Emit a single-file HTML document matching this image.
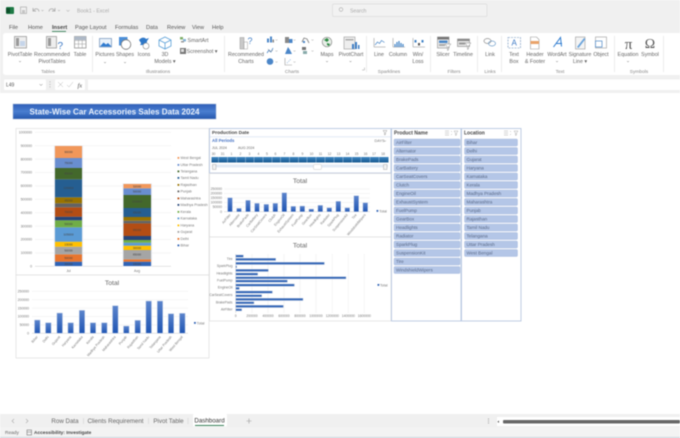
<!DOCTYPE html>
<html lang="en"><head><meta charset="utf-8"><title>Book1 - Excel</title>
<style>
html,body{margin:0;padding:0;width:680px;height:438px;overflow:hidden;background:#fff}
svg{display:block;filter:blur(.5px)}
text{font-family:"Liberation Sans",sans-serif}
.r text{font-size:5.300px;fill:#666;text-anchor:middle}
.g text{font-size:4.800px;fill:#888;text-anchor:middle}
.m text{font-size:5.600px;fill:#555}
.t{font-size:6.800px;fill:#666;text-anchor:middle}
.ax{font-size:3.400px;fill:#777}
.ae{font-size:3.400px;fill:#777;text-anchor:end}
.am{font-size:3.400px;fill:#777;text-anchor:middle}
.d{font-size:3px;fill:#444;text-anchor:middle}
.lg{font-size:3.600px;fill:#777}
.s{font-size:4.600px;fill:#5a6a88}
.h{font-size:5px;fill:#444;font-weight:bold}
.tab{font-size:6.200px;fill:#666;text-anchor:middle}
</style></head><body>
<svg width="680" height="438" viewBox="0 0 680 438" xmlns="http://www.w3.org/2000/svg">
<defs>
<linearGradient id="ban" x1="0" y1="0" x2="0" y2="1"><stop offset="0" stop-color="#2f5fb8"/><stop offset=".5" stop-color="#4a7ed0"/><stop offset="1" stop-color="#2456ad"/></linearGradient>
<linearGradient id="bar" x1="0" y1="0" x2="0" y2="1"><stop offset="0" stop-color="#5b84cc"/><stop offset="1" stop-color="#1f55b3"/></linearGradient>
<linearGradient id="tl" x1="0" y1="0" x2="0" y2="1"><stop offset="0" stop-color="#3f87c2"/><stop offset="1" stop-color="#14578f"/></linearGradient>
</defs>

<!-- app chrome -->
<rect width="680" height="93" fill="#f0f0f0"/>
<rect x="6" y="7" width="8" height="7" rx="1" fill="#1d7a45"/><rect x="6" y="8" width="4" height="5" fill="#0c4f2a"/>
<rect x="20.500" y="7" width="6" height="6.500" fill="none" stroke="#b5b5b5" stroke-width=".8"/><rect x="22" y="10" width="3" height="3" fill="#c5c5c5"/>
<path d="M33 8v3h3M33.500 11c1-3 5-3 5.500 0.500" fill="none" stroke="#b0b0b0" stroke-width=".9"/>
<path d="M55 8v3h-3M54.500 11c-1-3-5-3-5.500 0.500" fill="none" stroke="#b0b0b0" stroke-width=".9"/>
<path d="M41.500 10l1 1 1-1M58 10l1 1 1-1M66.500 10l1.500 1.500 1.500-1.500" fill="none" stroke="#bbb" stroke-width=".6"/>
<text x="77" y="12.500" font-size="5.200" fill="#aaa">Book1  -  Excel</text>
<rect x="332.500" y="4" width="154.500" height="12.500" rx="1.500" fill="#f2f2f2" stroke="#dcdcdc" stroke-width=".7"/>
<circle cx="341" cy="9.500" r="1.800" fill="none" stroke="#aaa" stroke-width=".6"/>
<text x="350" y="12.500" font-size="5.200" fill="#aaa">Search</text>

<g class="m">
<text x="9" y="29">File</text><text x="28" y="29">Home</text><text x="52" y="29" font-weight="bold" style="fill:#444">Insert</text>
<text x="75" y="29">Page Layout</text><text x="115" y="29">Formulas</text><text x="146" y="29">Data</text>
<text x="167" y="29">Review</text><text x="192" y="29">View</text><text x="212" y="29">Help</text>
</g>
<rect x="52" y="31" width="14" height=".8" fill="#217346"/>

<!-- ribbon -->
<rect x="3" y="33" width="690" height="42" rx="2.500" fill="#fff"/>
<path d="M92.500 36v36M224.500 36v36M366.500 36v36M430.500 36v36M477.500 36v36M501.500 36v36M614.500 36v36M663.500 36v36" stroke="#e2e2e2" stroke-width=".6"/>
<g class="r">
<text x="20" y="56">PivotTable</text>
<text x="52" y="56">Recommended</text><text x="52" y="63">PivotTables</text>
<text x="80" y="56">Table</text>
<text x="105" y="56">Pictures</text><text x="125" y="56">Shapes</text><text x="144" y="56">Icons</text>
<text x="165" y="56">3D</text><text x="165" y="63">Models ▾</text>
<text x="198" y="42">SmartArt</text><text x="202" y="53">Screenshot ▾</text>
<text x="246" y="56">Recommended</text><text x="246" y="63">Charts</text>
<text x="327" y="56">Maps</text><text x="351" y="56">PivotChart</text>
<text x="379" y="56">Line</text><text x="398" y="56">Column</text><text x="418" y="56">Win/</text><text x="418" y="63">Loss</text>
<text x="443" y="56">Slicer</text><text x="463" y="56">Timeline</text><text x="490" y="56">Link</text>
<text x="514" y="56">Text</text><text x="514" y="63">Box</text>
<text x="535" y="56">Header</text><text x="535" y="63">&amp; Footer</text>
<text x="557" y="56">WordArt</text>
<text x="580" y="56">Signature</text><text x="580" y="63">Line ▾</text>
<text x="601" y="56">Object</text>
<text x="628" y="56">Equation</text><text x="650" y="56">Symbol</text>
</g>
<g class="g">
<text x="48" y="73">Tables</text><text x="158" y="73">Illustrations</text><text x="292" y="73">Charts</text>
<text x="389" y="73">Sparklines</text><text x="454" y="73">Filters</text><text x="490" y="73">Links</text>
<text x="560" y="73">Text</text><text x="639" y="73">Symbols</text>
</g>
<path d="M19 61l1 1 1-1M104 62l1 1 1-1M124 62l1 1 1-1M326 61l1 1 1-1M349.500 61l1 1 1-1M556 61l1 1 1-1M627 61l1 1 1-1" fill="none" stroke="#777" stroke-width=".5"/>

<!-- ribbon icons -->
<rect x="14.500" y="36.500" width="12" height="11.500" fill="#eee" stroke="#8f8f8f" stroke-width=".7"/><rect x="16" y="38" width="3" height="8" fill="#999"/><rect x="20" y="41" width="5" height="5" fill="#c6d5ea"/>
<rect x="46.500" y="36.500" width="10" height="11.500" fill="#eee" stroke="#8f8f8f" stroke-width=".7"/><rect x="48" y="38" width="3" height="8" fill="#999"/>
<text x="57.500" y="49" font-size="10" fill="#3b78c4">?</text>
<rect x="74.500" y="36.500" width="11.500" height="11.500" fill="#fff" stroke="#888" stroke-width=".7"/><path d="M74.500 40.500h11.500M74.500 44h11.500M78.500 36.500v11.500M82.200 36.500v11.500" stroke="#999" stroke-width=".5"/><rect x="74.500" y="36.500" width="11.500" height="3.500" fill="#aeb9c7"/>
<rect x="99.500" y="38.500" width="12" height="8.500" fill="#eaf2fb" stroke="#6e8fb8" stroke-width=".7"/><path d="M100 46.500l3.500-4 2.500 2 2-1.500 3.500 3.500z" fill="#2f7bd0"/>
<rect x="119" y="37" width="8.500" height="8.500" fill="#4b8fd9"/><circle cx="126" cy="44.500" r="4.800" fill="#fff" stroke="#777" stroke-width=".8"/>
<path d="M139 40c2-3 6-3 7-1l3-1-2 3c0 3-2 4-4 4h-3c1-1 1-2 1-2z" fill="#2f78c8"/><circle cx="146" cy="46" r="3" fill="#fff" stroke="#888" stroke-width=".6"/>
<path d="M165 37l6 3v6l-6 3-6-3v-6zM159 40l6 3 6-3M165 43v6" fill="none" stroke="#5ba0d8" stroke-width=".8"/>
<rect x="180" y="37" width="3" height="2.500" fill="#7fae6a"/><rect x="183" y="39" width="3" height="2.500" fill="#88b6d8"/><rect x="181" y="41" width="3" height="1.500" fill="#999"/>
<rect x="180" y="48" width="6" height="6" fill="#777"/><rect x="181" y="49" width="3" height="3" fill="#ddd"/>
<rect x="240" y="37.500" width="4" height="11.500" fill="#c9c9c9" stroke="#888" stroke-width=".4"/><rect x="244" y="42" width="3.500" height="7" fill="#fff" stroke="#888" stroke-width=".4"/>
<text x="247.500" y="44" font-size="9" fill="#4a84c8">?</text>
<g fill="#4b86c8">
<rect x="267" y="38.500" width="2" height="4"/><rect x="270" y="36.500" width="2" height="6"/><rect x="272.500" y="39.500" width="1.500" height="3" fill="#888"/>
<rect x="285" y="37" width="4" height="6" fill="#888"/><rect x="289" y="39" width="3.500" height="4"/>
<path d="M302 42l2-4 3 1 2 4" fill="none" stroke="#888" stroke-width=".9"/><rect x="303" y="41" width="2" height="2"/>
<path d="M267 53l2-3 2 2 2-4" fill="none" stroke="#4b86c8" stroke-width=".8"/><path d="M268 49l2 3 3-2" fill="none" stroke="#888" stroke-width=".5"/>
<path d="M285 54l3-7 2 3 2 4z"/>
<rect x="302" y="47" width="4" height="3" fill="#777"/><rect x="303" y="51" width="4" height="3" fill="#8aa"/>
<circle cx="270" cy="61.500" r="3.300"/>
</g>
<path d="M285 58v7h7" fill="none" stroke="#999" stroke-width=".6"/><path d="M287 63l2-2 2-2" stroke="#9bbbdd" stroke-width=".9" stroke-dasharray="1 1"/>
<path d="M275.500 39.500l1 1 1-1M293.500 39.500l1 1 1-1M311.500 39.500l1 1 1-1M275.500 50.500l1 1 1-1M293.500 50.500l1 1 1-1M311.500 50.500l1 1 1-1M275.500 61.500l1 1 1-1M293.500 61.500l1 1 1-1" fill="none" stroke="#888" stroke-width=".4"/>
<circle cx="327" cy="42" r="4.800" fill="#e8efe8" stroke="#888" stroke-width=".7"/><path d="M324 40l3-2 2 2-2 2zM327 43l3 1-1 2-2-1z" fill="#2d8a43"/>
<rect x="344" y="37" width="11" height="12" fill="#eee" stroke="#999" stroke-width=".6"/><rect x="345.500" y="39" width="8" height="1.500" fill="#aaa"/><rect x="352" y="44" width="2" height="5" fill="#3f7fc6"/><rect x="355" y="42" width="2" height="7" fill="#3f7fc6"/><rect x="358" y="45" width="1.500" height="4" fill="#3f7fc6"/>
<path d="M374 38v9h11.500" fill="none" stroke="#888" stroke-width=".5"/><path d="M375 45l2.500-3 2 1.500 2-3 3 2" fill="none" stroke="#4a88c8" stroke-width=".7"/>
<path d="M393 38v9h12" fill="none" stroke="#888" stroke-width=".5"/><path d="M395 47v-3M397 47v-5M399 47v-6M401 47v-4M403 47v-3" stroke="#3f82c6" stroke-width="1.200"/>
<path d="M413 38v9h12" fill="none" stroke="#888" stroke-width=".5"/><rect x="414.500" y="40" width="2" height="2.500" fill="#3f82c6"/><rect x="418" y="43" width="2" height="2.500" fill="#555"/><rect x="421.500" y="40" width="2" height="2.500" fill="#3f82c6"/>
<rect x="437.500" y="37" width="11.500" height="11" fill="#eee" stroke="#888" stroke-width=".6"/><rect x="437.500" y="37" width="11.500" height="2.500" fill="#777"/><rect x="439" y="40.500" width="8.500" height="2.500" fill="#4a88c8"/><rect x="439" y="44" width="6" height="2" fill="#aaa"/><path d="M445 44h6l-2.500 3v3l-1 .500v-3.500z" fill="#fff" stroke="#777" stroke-width=".4"/>
<rect x="457.500" y="39" width="12" height="7.500" fill="#e5e5e5" stroke="#888" stroke-width=".6"/><rect x="457.500" y="39" width="12" height="2" fill="#888"/><rect x="459" y="42.500" width="6" height="2" fill="#999"/><path d="M465 43h6l-2.500 3v3l-1 .500v-3.500z" fill="#fff" stroke="#777" stroke-width=".4"/>
<ellipse cx="487.500" cy="41" rx="3.500" ry="2.500" fill="none" stroke="#8a8a8a" stroke-width=".7"/><ellipse cx="492" cy="43.500" rx="3.500" ry="2.500" fill="none" stroke="#6b9bc8" stroke-width=".7"/>
<rect x="508" y="37.500" width="12.500" height="10.500" fill="#fff" stroke="#6b8db8" stroke-width=".6" stroke-dasharray="2 1"/><text x="514.200" y="45.500" font-size="8" fill="#3b78c4" text-anchor="middle">A</text>
<path d="M530.500 37h6l2.500 2.500v9.500h-8.500z" fill="#fff" stroke="#999" stroke-width=".6"/><rect x="530.500" y="41" width="8.500" height="3" fill="#e9a36a"/>
<path d="M553.500 47l7-9.500 1 9M556 43.500h6" fill="none" stroke="#2f7cd0" stroke-width="1"/>
<rect x="575.500" y="37" width="9.500" height="12" fill="#f4f4f4" stroke="#999" stroke-width=".6"/><path d="M577 47l7-9 1.500 1-7 9z" fill="#6ba4dc"/>
<rect x="595.500" y="37" width="11" height="11" fill="#fff" stroke="#999" stroke-width=".6"/><rect x="595.500" y="41" width="6.500" height="6" fill="#fff" stroke="#4a88c8" stroke-width=".7"/>
<text x="628.500" y="49" font-size="15" fill="#555" text-anchor="middle" style="font-family:'Liberation Serif',serif">π</text>
<text x="650" y="48" font-size="14" fill="#555" text-anchor="middle" style="font-family:'Liberation Serif',serif">Ω</text>
<path d="M362 70h2.500v-2.500" fill="none" stroke="#888" stroke-width=".4"/>

<!-- formula bar -->
<rect x="4" y="79.500" width="42" height="10.500" rx="1" fill="#fff"/>
<text x="6" y="86.500" font-size="5" fill="#555">L49</text>
<path d="M39.500 84l1.500 1.500 1.500-1.500" fill="none" stroke="#777" stroke-width=".5"/>
<path d="M50 81.500v.8M50 84v.8M50 86.500v.8" stroke="#888" stroke-width=".7"/>
<rect x="55" y="79.500" width="30" height="10.500" rx="1" fill="#fff"/>
<path d="M58 82l5 5M63 82l-5 5" stroke="#bbb" stroke-width=".5"/><path d="M67 85l2 2 4-5" fill="none" stroke="#bbb" stroke-width=".5"/>
<text x="77.500" y="87.500" font-size="6.500" fill="#555" font-style="italic" style="font-family:'Liberation Serif',serif">fx</text>
<rect x="88" y="79.500" width="592" height="10.500" fill="#fff"/>

<!-- sheet -->
<rect x="0" y="93" width="680" height="321" fill="#fff"/>

<!-- banner -->
<rect x="13" y="104" width="203" height="15" fill="url(#ban)" stroke="#9fb3d4" stroke-width=".5"/>
<text x="114.500" y="114.700" font-size="8.500" font-weight="bold" fill="#e8effa" text-anchor="middle" textLength="170" lengthAdjust="spacingAndGlyphs">State-Wise Car Accessories Sales Data 2024</text>

<!-- stacked chart -->
<rect x="16" y="128.500" width="193" height="146.500" fill="#fff" stroke="#d9d9d9" stroke-width=".6"/>
<path d="M35 132.300h136M35 145.700h136M35 159.100h136M35 172.500h136M35 185.900h136M35 199.300h136M35 212.700h136M35 226.100h136M35 239.500h136M35 252.900h136" stroke="#ececec" stroke-width=".5"/>
<path d="M35 266.300h136" stroke="#ccc" stroke-width=".5"/>
<g class="ae">
<text x="32" y="133.500">1000000</text><text x="32" y="147">900000</text><text x="32" y="160.300">800000</text><text x="32" y="173.700">700000</text><text x="32" y="187">600000</text><text x="32" y="200.500">500000</text><text x="32" y="214">400000</text><text x="32" y="227.300">300000</text><text x="32" y="240.700">200000</text><text x="32" y="254">100000</text><text x="32" y="267.500">0</text>
</g>
<rect x="54" y="145.500" width="29" height="121" fill="#e6e9f0"/>
<rect x="122.500" y="183.500" width="29.500" height="83" fill="#e6e9f0"/>
<g>
<rect x="55" y="261.700" width="27" height="4.300" fill="#2f63b5"/>
<rect x="55" y="254.300" width="27" height="7.400" fill="#e8752e"/>
<rect x="55" y="246.700" width="27" height="7.600" fill="#a5a5a5"/>
<rect x="55" y="241.700" width="27" height="5" fill="#ffc000"/>
<rect x="55" y="227.300" width="27" height="14.400" fill="#5b9bd5"/>
<rect x="55" y="220.300" width="27" height="7" fill="#70ad47"/>
<rect x="55" y="216.700" width="27" height="3.600" fill="#264478"/>
<rect x="55" y="207.300" width="27" height="9.400" fill="#b34d14"/>
<rect x="55" y="203.300" width="27" height="4" fill="#636363"/>
<rect x="55" y="197.300" width="27" height="6" fill="#997300"/>
<rect x="55" y="179.300" width="27" height="18" fill="#255e91"/>
<rect x="55" y="168" width="27" height="11.300" fill="#43682b"/>
<rect x="55" y="158" width="27" height="10" fill="#698ed0"/>
<rect x="55" y="146" width="27" height="12" fill="#f1975a"/>
</g>
<g>
<rect x="123.500" y="261.700" width="27.500" height="4.300" fill="#2f63b5"/>
<rect x="123.500" y="259.300" width="27.500" height="2.400" fill="#e8752e"/>
<rect x="123.500" y="250" width="27.500" height="9.300" fill="#a5a5a5"/>
<rect x="123.500" y="245.700" width="27.500" height="4.300" fill="#ffc000"/>
<rect x="123.500" y="242.700" width="27.500" height="3" fill="#5b9bd5"/>
<rect x="123.500" y="240" width="27.500" height="2.700" fill="#70ad47"/>
<rect x="123.500" y="236" width="27.500" height="4" fill="#264478"/>
<rect x="123.500" y="223.300" width="27.500" height="12.700" fill="#b34d14"/>
<rect x="123.500" y="220.700" width="27.500" height="2.700" fill="#636363"/>
<rect x="123.500" y="217" width="27.500" height="3.700" fill="#997300"/>
<rect x="123.500" y="208" width="27.500" height="9" fill="#255e91"/>
<rect x="123.500" y="195" width="27.500" height="13" fill="#43682b"/>
<rect x="123.500" y="188.300" width="27.500" height="6.700" fill="#698ed0"/>
<rect x="123.500" y="184" width="27.500" height="4.300" fill="#f1975a"/>
</g>
<g class="d">
<text x="68.500" y="265">30000</text><text x="68.500" y="259">50000</text><text x="68.500" y="251.500">50000</text><text x="68.500" y="245.500">13000</text><text x="68.500" y="235.500">105000</text><text x="68.500" y="225">50000</text><text x="68.500" y="213">70000</text><text x="68.500" y="201.500">45000</text><text x="68.500" y="189">135000</text><text x="68.500" y="174.500">85000</text><text x="68.500" y="164">75000</text><text x="68.500" y="153">90000</text>
<text x="137" y="265">15000</text><text x="137" y="255.500">65000</text><text x="137" y="249">30000</text><text x="137" y="231">95000</text><text x="137" y="213.500">65000</text><text x="137" y="202.500">100000</text><text x="137" y="192.500">50000</text><text x="137" y="187.500">32000</text>
</g>
<text x="68.500" y="272" class="am">Jul</text><text x="137" y="272" class="am">Aug</text>
<g>
<rect x="177.500" y="157" width="1.800" height="1.800" fill="#f1975a"/><rect x="177.500" y="164" width="1.800" height="1.800" fill="#698ed0"/><rect x="177.500" y="170.500" width="1.800" height="1.800" fill="#43682b"/><rect x="177.500" y="177" width="1.800" height="1.800" fill="#255e91"/><rect x="177.500" y="184" width="1.800" height="1.800" fill="#997300"/><rect x="177.500" y="190.500" width="1.800" height="1.800" fill="#636363"/><rect x="177.500" y="197.500" width="1.800" height="1.800" fill="#b34d14"/><rect x="177.500" y="204" width="1.800" height="1.800" fill="#264478"/><rect x="177.500" y="211" width="1.800" height="1.800" fill="#70ad47"/><rect x="177.500" y="217.500" width="1.800" height="1.800" fill="#5b9bd5"/><rect x="177.500" y="224.500" width="1.800" height="1.800" fill="#ffc000"/><rect x="177.500" y="231" width="1.800" height="1.800" fill="#a5a5a5"/><rect x="177.500" y="238" width="1.800" height="1.800" fill="#e8752e"/><rect x="177.500" y="244.500" width="1.800" height="1.800" fill="#2f63b5"/>
</g>
<g class="lg">
<text x="180.500" y="159.200">West Bengal</text><text x="180.500" y="166">Uttar Pradesh</text><text x="180.500" y="172.500">Telangana</text><text x="180.500" y="179.200">Tamil Nadu</text><text x="180.500" y="186">Rajasthan</text><text x="180.500" y="192.700">Punjab</text><text x="180.500" y="199.500">Maharashtra</text><text x="180.500" y="206.200">Madhya Pradesh</text><text x="180.500" y="213">Kerala</text><text x="180.500" y="219.700">Karnataka</text><text x="180.500" y="226.500">Haryana</text><text x="180.500" y="233.200">Gujarat</text><text x="180.500" y="240">Delhi</text><text x="180.500" y="246.700">Bihar</text>
</g>

<!-- total chart 1 -->
<rect x="16" y="275" width="193" height="83" fill="#fff" stroke="#d9d9d9" stroke-width=".6"/>
<text x="112" y="285" class="t">Total</text>
<path d="M32 291.300h156M32 299.700h156M32 308.100h156M32 316.500h156M32 324.900h156" stroke="#ececec" stroke-width=".5"/><path d="M32 333.300h156" stroke="#ccc" stroke-width=".5"/>
<g class="ae"><text x="29" y="292.500">250000</text><text x="29" y="301">200000</text><text x="29" y="309.300">150000</text><text x="29" y="317.700">100000</text><text x="29" y="326">50000</text><text x="29" y="334.500">0</text></g>
<g fill="url(#bar)" stroke="#c7d3e8" stroke-width=".5">
<rect x="34.500" y="320" width="5.600" height="13.300"/><rect x="45.500" y="322.700" width="5.600" height="10.600"/><rect x="56.900" y="313" width="5.600" height="20.300"/><rect x="67.900" y="322.700" width="5.600" height="10.600"/><rect x="79.200" y="310.300" width="5.600" height="23"/><rect x="90.200" y="322.700" width="5.600" height="10.600"/><rect x="101.500" y="322.700" width="5.600" height="10.600"/><rect x="112.500" y="305.700" width="5.600" height="27.600"/><rect x="123.500" y="326" width="5.600" height="7.300"/><rect x="134.900" y="320.300" width="5.600" height="13"/><rect x="145.900" y="301" width="5.600" height="32.300"/><rect x="157.200" y="301" width="5.600" height="32.300"/><rect x="168.200" y="313.700" width="5.600" height="19.600"/><rect x="179.500" y="313.300" width="5.600" height="20"/>
</g>
<g class="ae">
<text transform="translate(38,337) rotate(-50)">Bihar</text><text transform="translate(49,337) rotate(-50)">Delhi</text><text transform="translate(60.500,337) rotate(-50)">Gujarat</text><text transform="translate(71.500,337) rotate(-50)">Haryana</text><text transform="translate(83,337) rotate(-50)">Karnataka</text><text transform="translate(94,337) rotate(-50)">Kerala</text><text transform="translate(105,337) rotate(-50)">Madhya Pradesh</text><text transform="translate(116,337) rotate(-50)">Maharashtra</text><text transform="translate(127,337) rotate(-50)">Punjab</text><text transform="translate(138.500,337) rotate(-50)">Rajasthan</text><text transform="translate(149.500,337) rotate(-50)">Tamil Nadu</text><text transform="translate(161,337) rotate(-50)">Telangana</text><text transform="translate(172,337) rotate(-50)">Uttar Pradesh</text><text transform="translate(183,337) rotate(-50)">West Bengal</text>
</g>
<rect x="194" y="322" width="1.800" height="1.800" fill="#2f63b5"/><text x="196.800" y="324.300" class="lg">Total</text>

<!-- timeline -->
<rect x="209.500" y="128.500" width="181.500" height="44.500" fill="#fff" stroke="#b8c8e2" stroke-width=".9"/>
<text x="212" y="134" font-size="4.800" font-weight="bold" fill="#444">Production  Date</text>
<path d="M383 130.500h4l-1.500 2v2l-1 .500v-2.500z" fill="none" stroke="#999" stroke-width=".5"/>
<path d="M210 136.800h180.500" stroke="#dde6f3" stroke-width=".8"/>
<text x="212" y="142" font-size="4.300" fill="#4472c4" font-weight="bold">All Periods</text>
<text x="374.500" y="142" font-size="3.800" fill="#777">DAYS</text><path d="M384 140.500l1 1 1-1" fill="none" stroke="#777" stroke-width=".4"/>
<text x="212" y="149" font-size="3.500" fill="#666">JUL 2024</text><text x="238" y="149" font-size="3.500" fill="#666">AUG 2024</text>
<g class="am">
<text x="213.500" y="155">30</text><text x="222.700" y="155">31</text><text x="231.500" y="155">1</text><text x="240.500" y="155">2</text><text x="249.500" y="155">3</text><text x="258.500" y="155">4</text><text x="267" y="155">5</text><text x="275.500" y="155">6</text><text x="284.500" y="155">7</text><text x="293.500" y="155">8</text><text x="302.500" y="155">9</text><text x="311.500" y="155">10</text><text x="320.500" y="155">11</text><text x="329.500" y="155">12</text><text x="338.500" y="155">13</text><text x="347.500" y="155">14</text><text x="356.500" y="155">15</text><text x="365.500" y="155">16</text><text x="374" y="155">17</text><text x="383" y="155">18</text>
</g>
<rect x="211.500" y="157" width="177" height="5.500" fill="url(#tl)"/>
<path d="M218.500 157v5.500M227.500 157v5.500M236.500 157v5.500M245.500 157v5.500M254 157v5.500M263 157v5.500M272 157v5.500M280.500 157v5.500M289.500 157v5.500M298.500 157v5.500M307 157v5.500M316 157v5.500M325 157v5.500M334 157v5.500M343 157v5.500M352 157v5.500M361 157v5.500M370 157v5.500M379 157v5.500" stroke="#cfe0f0" stroke-width=".4"/>
<rect x="212" y="164.500" width="176" height="3" fill="#e3ebf6"/>
<rect x="212.500" y="164.500" width="3.500" height="5" fill="#f2f2f2" stroke="#999" stroke-width=".4"/><rect x="383.500" y="164.500" width="3.500" height="5" fill="#f2f2f2" stroke="#999" stroke-width=".4"/>
<rect x="313.500" y="164.500" width="8" height="5" rx="1" fill="#fff" stroke="#bbb" stroke-width=".4"/>

<!-- total chart 2 -->
<rect x="209.500" y="173.500" width="181.500" height="63.500" fill="#fff" stroke="#d9d9d9" stroke-width=".6"/>
<text x="300" y="183" class="t">Total</text>
<path d="M224 189h146M224 193.500h146M224 198h146M224 202.500h146M224 207h146" stroke="#ececec" stroke-width=".5"/><path d="M224 211.700h146" stroke="#ccc" stroke-width=".5"/>
<g class="ae"><text x="222" y="190">250000</text><text x="222" y="194.500">200000</text><text x="222" y="199">150000</text><text x="222" y="203.500">100000</text><text x="222" y="208">50000</text><text x="222" y="212.800">0</text></g>
<g fill="url(#bar)" stroke="#c7d3e8" stroke-width=".4">
<rect x="227.600" y="197.700" width="4.800" height="14"/><rect x="236.600" y="208.300" width="4.800" height="3.400"/><rect x="245.600" y="200.300" width="4.800" height="11.400"/><rect x="254.600" y="203.300" width="4.800" height="8.400"/><rect x="263.900" y="204.300" width="4.800" height="7.400"/><rect x="272.900" y="203.300" width="4.800" height="8.400"/><rect x="281.900" y="192.700" width="4.800" height="19"/><rect x="290.900" y="206.300" width="4.800" height="5.400"/><rect x="299.900" y="206" width="4.800" height="5.700"/><rect x="308.900" y="209" width="4.800" height="2.700"/><rect x="317.900" y="205.300" width="4.800" height="6.400"/><rect x="326.900" y="207.700" width="4.800" height="4"/><rect x="335.900" y="201.300" width="4.800" height="10.400"/><rect x="344.900" y="207.700" width="4.800" height="4"/><rect x="353.900" y="195.700" width="4.800" height="16"/><rect x="362.900" y="202.700" width="4.800" height="9"/>
</g>
<g class="ae">
<text transform="translate(231,215) rotate(-50)">AirFilter</text><text transform="translate(240,215) rotate(-50)">Alternator</text><text transform="translate(249,215) rotate(-50)">BrakePads</text><text transform="translate(258,215) rotate(-50)">CarBattery</text><text transform="translate(267,215) rotate(-50)">CarSeatCovers</text><text transform="translate(276,215) rotate(-50)">Clutch</text><text transform="translate(285,215) rotate(-50)">EngineOil</text><text transform="translate(294,215) rotate(-50)">ExhaustSystem</text><text transform="translate(303,215) rotate(-50)">FuelPump</text><text transform="translate(312,215) rotate(-50)">GearBox</text><text transform="translate(321,215) rotate(-50)">Headlights</text><text transform="translate(330,215) rotate(-50)">Radiator</text><text transform="translate(339,215) rotate(-50)">SparkPlug</text><text transform="translate(348,215) rotate(-50)">SuspensionKit</text><text transform="translate(357,215) rotate(-50)">Tire</text><text transform="translate(366,215) rotate(-50)">WindshieldWipers</text>
</g>
<rect x="376.500" y="210" width="1.800" height="1.800" fill="#2f63b5"/><text x="379.200" y="212.300" class="lg">Total</text>

<!-- total chart 3 -->
<rect x="209.500" y="237" width="181.500" height="84" fill="#fff" stroke="#d9d9d9" stroke-width=".6"/>
<text x="300" y="247.500" class="t">Total</text>
<path d="M252 254v59M268 254v59M284 254v59M300 254v59M316 254v59M332.300 254v59M348.300 254v59M364.300 254v59" stroke="#ececec" stroke-width=".5"/><path d="M235.700 254v59" stroke="#ccc" stroke-width=".5"/>
<g fill="#2f63b5" stroke="#b9c6dd" stroke-width=".4">
<rect x="235.700" y="255" width="7.700" height="2.200"/><rect x="235.700" y="258.300" width="40" height="2.200"/><rect x="235.700" y="262.300" width="88.700" height="2.200"/><rect x="235.700" y="265.700" width="1" height="2.200"/><rect x="235.700" y="269.300" width="32.700" height="2.200"/><rect x="235.700" y="273" width="22" height="2.200"/><rect x="235.700" y="276.700" width="110.300" height="2.200"/><rect x="235.700" y="280" width="51.700" height="2.200"/><rect x="235.700" y="284" width="58.700" height="2.200"/><rect x="235.700" y="287.300" width="3.700" height="2.200"/><rect x="235.700" y="291" width="36.700" height="2.200"/><rect x="235.700" y="294.700" width="26" height="2.200"/><rect x="235.700" y="298.300" width="67.300" height="2.200"/><rect x="235.700" y="301.700" width="18.300" height="2.200"/><rect x="235.700" y="305.300" width="47.700" height="2.200"/><rect x="235.700" y="308.700" width="6" height="2.200"/>
</g>
<g class="ae">
<text x="232.500" y="260">Tire</text><text x="232.500" y="267">SparkPlug</text><text x="232.500" y="274.300">Headlights</text><text x="232.500" y="281.300">FuelPump</text><text x="232.500" y="288.700">EngineOil</text><text x="232.500" y="296">CarSeatCovers</text><text x="232.500" y="303.300">BrakePads</text><text x="232.500" y="310.700">AirFilter</text>
</g>
<g class="am">
<text x="235.700" y="317">0</text><text x="252" y="317">200000</text><text x="268" y="317">400000</text><text x="284" y="317">600000</text><text x="300" y="317">800000</text><text x="316" y="317">1000000</text><text x="332.300" y="317">1200000</text><text x="348.300" y="317">1400000</text><text x="364.300" y="317">1600000</text>
</g>
<rect x="377.500" y="284" width="1.800" height="1.800" fill="#2f63b5"/><text x="380" y="286.300" class="lg">Total</text>

<!-- product slicer -->
<rect x="391.500" y="128.500" width="69.500" height="192.500" fill="#fff" stroke="#b8c8e2" stroke-width=".9"/>
<text x="394" y="134.500" class="h">Product Name</text>
<path d="M445 131h4M445 133h4M445 135h4M451 131l1 1M451 135l1-1" stroke="#aaa" stroke-width=".5" fill="none"/>
<path d="M454 131h4l-1.500 2v2l-1 .500v-2.500z" fill="none" stroke="#aaa" stroke-width=".5"/>
<g fill="#b4c6e7" stroke="#a3b6da" stroke-width=".4">
<rect x="394" y="139" width="66" height="7" rx="1"/><rect x="394" y="147.500" width="66" height="7" rx="1"/><rect x="394" y="156" width="66" height="7" rx="1"/><rect x="394" y="164.500" width="66" height="7" rx="1"/><rect x="394" y="173" width="66" height="7" rx="1"/><rect x="394" y="181.500" width="66" height="7" rx="1"/><rect x="394" y="190" width="66" height="7" rx="1"/><rect x="394" y="198.500" width="66" height="7" rx="1"/><rect x="394" y="207" width="66" height="7" rx="1"/><rect x="394" y="215.500" width="66" height="7" rx="1"/><rect x="394" y="224" width="66" height="7" rx="1"/><rect x="394" y="232.500" width="66" height="7" rx="1"/><rect x="394" y="241" width="66" height="7" rx="1"/><rect x="394" y="249.500" width="66" height="7" rx="1"/><rect x="394" y="258" width="66" height="7" rx="1"/><rect x="394" y="266.500" width="66" height="7" rx="1"/>
</g>
<g class="s">
<text x="396" y="144.200">AirFilter</text><text x="396" y="152.700">Alternator</text><text x="396" y="161.200">BrakePads</text><text x="396" y="169.700">CarBattery</text><text x="396" y="178.200">CarSeatCovers</text><text x="396" y="186.700">Clutch</text><text x="396" y="195.200">EngineOil</text><text x="396" y="203.700">ExhaustSystem</text><text x="396" y="212.200">FuelPump</text><text x="396" y="220.700">GearBox</text><text x="396" y="229.200">Headlights</text><text x="396" y="237.700">Radiator</text><text x="396" y="246.200">SparkPlug</text><text x="396" y="254.700">SuspensionKit</text><text x="396" y="263.200">Tire</text><text x="396" y="271.700">WindshieldWipers</text>
</g>

<!-- location slicer -->
<rect x="461.500" y="128.500" width="59.500" height="192.500" fill="#fff" stroke="#b8c8e2" stroke-width=".9"/>
<text x="464" y="134.500" class="h">Location</text>
<path d="M504 131h4M504 133h4M504 135h4M510 131l1 1M510 135l1-1" stroke="#aaa" stroke-width=".5" fill="none"/>
<path d="M514 131h4l-1.500 2v2l-1 .500v-2.500z" fill="none" stroke="#aaa" stroke-width=".5"/>
<g fill="#b4c6e7" stroke="#a3b6da" stroke-width=".4">
<rect x="464.500" y="139" width="53" height="7" rx="1"/><rect x="464.500" y="147.500" width="53" height="7" rx="1"/><rect x="464.500" y="156" width="53" height="7" rx="1"/><rect x="464.500" y="164.500" width="53" height="7" rx="1"/><rect x="464.500" y="173" width="53" height="7" rx="1"/><rect x="464.500" y="181.500" width="53" height="7" rx="1"/><rect x="464.500" y="190" width="53" height="7" rx="1"/><rect x="464.500" y="198.500" width="53" height="7" rx="1"/><rect x="464.500" y="207" width="53" height="7" rx="1"/><rect x="464.500" y="215.500" width="53" height="7" rx="1"/><rect x="464.500" y="224" width="53" height="7" rx="1"/><rect x="464.500" y="232.500" width="53" height="7" rx="1"/><rect x="464.500" y="241" width="53" height="7" rx="1"/><rect x="464.500" y="249.500" width="53" height="7" rx="1"/>
</g>
<g class="s">
<text x="466.500" y="144.200">Bihar</text><text x="466.500" y="152.700">Delhi</text><text x="466.500" y="161.200">Gujarat</text><text x="466.500" y="169.700">Haryana</text><text x="466.500" y="178.200">Karnataka</text><text x="466.500" y="186.700">Kerala</text><text x="466.500" y="195.200">Madhya Pradesh</text><text x="466.500" y="203.700">Maharashtra</text><text x="466.500" y="212.200">Punjab</text><text x="466.500" y="220.700">Rajasthan</text><text x="466.500" y="229.200">Tamil Nadu</text><text x="466.500" y="237.700">Telangana</text><text x="466.500" y="246.200">Uttar Pradesh</text><text x="466.500" y="254.700">West Bengal</text>
</g>

<!-- tabs -->
<rect x="0" y="414" width="680" height="13" fill="#f0f0f0"/>
<path d="M14 419l-2 2 2 2M26 419l2 2-2 2" fill="none" stroke="#aaa" stroke-width=".6"/>
<text x="65" y="423" class="tab">Row Data</text><text x="115.500" y="423" class="tab">Clients Requirement</text><text x="168.500" y="423" class="tab">Pivot Table</text>
<path d="M83.500 418v6M148.500 418v6M188 418v6" stroke="#ccc" stroke-width=".5"/>
<rect x="193" y="414" width="34" height="12.500" rx="1" fill="#fff"/>
<text x="209.500" y="422.500" class="tab" style="fill:#333">Dashboard</text>
<rect x="195" y="425" width="29" height=".9" fill="#217346"/>
<path d="M249 418.500v5M246.500 421h5" stroke="#999" stroke-width=".6"/>
<path d="M488.500 418.500v1M488.500 420.500v1M488.500 422.500v1" stroke="#aaa" stroke-width="1.200"/>
<rect x="497" y="417" width="183" height="9" fill="#fff"/>
<path d="M499 420.500l-1.600 1.200 1.600 1.200z" fill="#555"/>
<rect x="503" y="420" width="177" height="3.500" rx="1" fill="#686868"/>

<!-- status -->
<rect x="0" y="427" width="680" height="10" fill="#f3f3f3"/>
<rect x="0" y="437" width="680" height="1" fill="#c6d0da"/>
<text x="5" y="434" font-size="4.800" fill="#666">Ready</text>
<rect x="27" y="430" width="4.500" height="5" fill="none" stroke="#777" stroke-width=".6"/><path d="M27 432h4.500" stroke="#777" stroke-width=".5"/>
<text x="34" y="434" font-size="4.800" fill="#444" font-weight="bold">Accessibility: Investigate</text>
</svg>
</body></html>
